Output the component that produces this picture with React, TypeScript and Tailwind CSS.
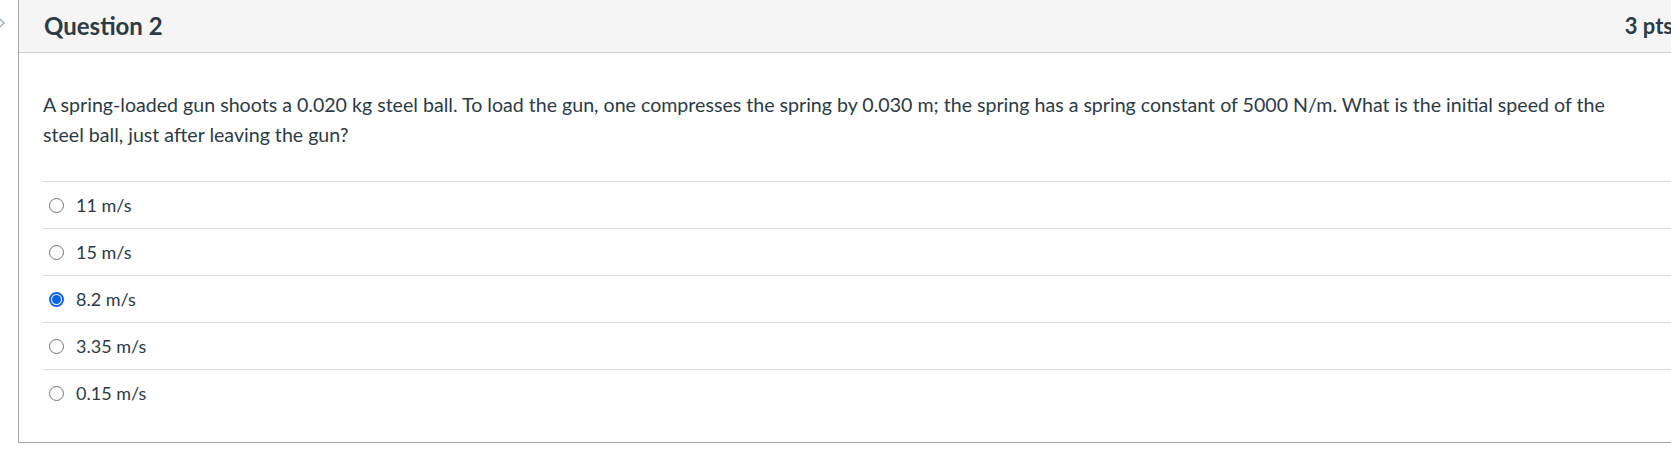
import { useState } from 'react'

const ANSWERS = ['11 m/s', '15 m/s', '8.2 m/s', '3.35 m/s', '0.15 m/s']

const QUESTION =
  'A spring-loaded gun shoots a 0.020 kg steel ball. To load the gun, one compresses the spring by 0.030 m; the spring has a spring constant of 5000 N/m. What is the initial speed of the steel ball, just after leaving the gun?'

function Radio({ checked }: { checked: boolean }) {
  return checked ? (
    <span className="flex h-[15px] w-[15px] items-center justify-center rounded-full border-2 border-[#0b63e5]">
      <span className="h-[9px] w-[9px] rounded-full bg-[#0b63e5]" />
    </span>
  ) : (
    <span className="h-[15px] w-[15px] rounded-full border border-[#767676] bg-white" />
  )
}

export default function App() {
  const [selected, setSelected] = useState(2)

  return (
    <div
      className="flex h-[456px] w-[1671px] overflow-hidden bg-white text-[#2d3b45]"
      style={{ fontFamily: 'Lato, "Noto Sans", sans-serif' }}
    >
      {/* collapse chevron */}
      <div className="w-[18px] shrink-0 pt-[14px]">
        <svg width="12" height="18" viewBox="0 0 12 18" className="-ml-[5px]">
          <path d="M1 1.5 L9 9 L1 16.5" fill="none" stroke="#a3b4c4" strokeWidth="1.6" />
        </svg>
      </div>

      {/* question card */}
      <div className="h-[443px] w-[1680px] shrink-0 border-b border-l border-[#a6a6a6]">
        <div className="flex h-[53px] items-center justify-between border-b border-[#c7cdd1] bg-[#f5f5f5] pl-[25px] pr-[25px]">
          <h2 className="text-[24px] font-bold leading-none">Question 2</h2>
          <span className="text-[22px] font-bold leading-none">3 pts</span>
        </div>

        <div className="pl-[24px] pt-[37px]">
          <p className="pr-[58px] text-[19.6px] leading-[30px]">{QUESTION}</p>

          <div className="mt-[31px]">
            {ANSWERS.map((a, i) => (
              <label
                key={a}
                onClick={() => setSelected(i)}
                className="flex h-[47px] cursor-pointer items-center gap-[12px] border-t border-[#d9d9d9] pl-[6px]"
              >
                <Radio checked={selected === i} />
                <span className="text-[18px]">{a}</span>
              </label>
            ))}
          </div>
        </div>
      </div>
    </div>
  )
}
